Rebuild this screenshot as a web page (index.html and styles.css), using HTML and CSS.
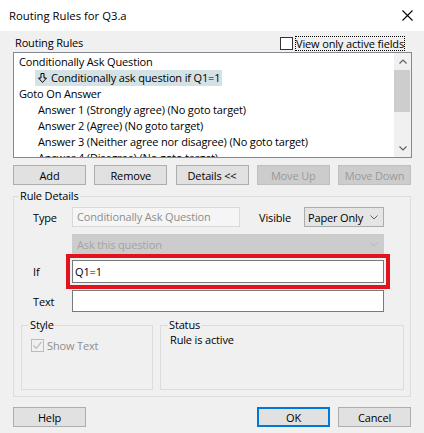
FILE: index.html
```html
<!DOCTYPE html>
<html lang="en">
<head>
<meta charset="utf-8">
<title>Routing Rules for Q3.a</title>
<link rel="stylesheet" href="styles.css">
</head>
<body>
<div class="titlebar">
  <span class="title">Routing Rules for Q3.a</span>
  <svg class="close" width="11" height="11" viewBox="0 0 11 11"><path d="M0.5 0.5L10.5 10.5M10.5 0.5L0.5 10.5" stroke="#000" stroke-width="1.1" fill="none"/></svg>
</div>
<div class="content">
  <div class="rr-head">
    <span class="rr-label">Routing Rules</span>
    <span class="chk"><span class="box"></span><span class="focus">View only active fields</span></span>
  </div>
  <div class="listbox">
    <div class="items">
      <div class="item">Conditionally Ask Question</div>
      <div class="item sub"><span class="sel"><svg class="arrow" width="9" height="10" viewBox="0 0 9 10"><path d="M3 0.5H6V5H8.5L4.5 9.5L0.5 5H3Z" fill="none" stroke="#000" stroke-width="1"/></svg>Conditionally ask question if Q1=1</span></div>
      <div class="item">Goto On Answer</div>
      <div class="item sub">Answer 1 (Strongly agree) (No goto target)</div>
      <div class="item sub">Answer 2 (Agree) (No goto target)</div>
      <div class="item sub">Answer 3 (Neither agree nor disagree) (No goto target)</div>
      <div class="item sub">Answer 4 (Disagree) (No goto target)</div>
    </div>
    <div class="scrollbar">
      <div class="sb-btn"><svg width="8" height="5" viewBox="0 0 8 5"><path d="M0.5 4.5L4 1L7.5 4.5" fill="none" stroke="#606060" stroke-width="1.2"/></svg></div>
      <div class="sb-track"><div class="thumb"></div></div>
      <div class="sb-btn"><svg width="8" height="5" viewBox="0 0 8 5"><path d="M0.5 0.5L4 4L7.5 0.5" fill="none" stroke="#606060" stroke-width="1.2"/></svg></div>
    </div>
  </div>
  <div class="btnrow">
    <button class="btn">Add</button>
    <button class="btn">Remove</button>
    <button class="btn">Details &lt;&lt;</button>
    <button class="btn disabled">Move Up</button>
    <button class="btn disabled">Move Down</button>
  </div>
  <fieldset class="details">
    <legend>Rule Details</legend>
    <div class="details-in">
      <div class="row">
        <span class="lbl">Type</span>
        <span class="field type">Conditionally Ask Question</span>
        <span class="vis-lbl">Visible</span>
        <span class="combo"><span>Paper Only</span><svg width="8" height="5" viewBox="0 0 8 5"><path d="M0.5 0.5L4 4L7.5 0.5" fill="none" stroke="#606060" stroke-width="1"/></svg></span>
      </div>
      <div class="row ask-row">
        <span class="lbl"></span>
        <span class="combo disabled wide"><span>Ask this question</span><svg width="8" height="5" viewBox="0 0 8 5"><path d="M0.5 0.5L4 4L7.5 0.5" fill="none" stroke="#b8b8b8" stroke-width="1"/></svg></span>
      </div>
      <div class="row if-row">
        <span class="lbl">If</span>
        <span class="highlight"><span class="field edit if">Q1=1</span></span>
      </div>
      <div class="row text-row">
        <span class="lbl">Text</span>
        <span class="field edit text"></span>
      </div>
      <div class="groups">
        <fieldset class="grp style">
          <legend>Style</legend>
          <div class="cb-row"><span class="dbox"><svg width="11" height="11" viewBox="0 0 11 11"><path d="M1.5 5.5L4.2 8.3L9.5 2" fill="none" stroke="#bdbdbd" stroke-width="1.3"/></svg></span><span class="dis-text">Show Text</span></div>
        </fieldset>
        <fieldset class="grp status">
          <legend>Status</legend>
          <div class="status-text">Rule is active</div>
        </fieldset>
      </div>
    </div>
  </fieldset>
  <div class="footer">
    <button class="btn">Help</button>
    <span class="spacer"></span>
    <button class="btn default">OK</button>
    <button class="btn">Cancel</button>
  </div>
</div>
</body>
</html>
```
FILE: styles.css
```css
* { box-sizing: border-box; }
html, body { margin: 0; padding: 0; }
body {
  width: 424px;
  height: 433px;
  overflow: hidden;
  background: #f0f0f0;
  font-family: "Segoe UI", "Open Sans", sans-serif;
  font-size: 11px;
  letter-spacing: -0.15px;
  color: #000;
}
.titlebar {
  height: 31px;
  background: #fff;
  display: flex;
  align-items: center;
  justify-content: space-between;
  padding: 0 11px 0 9px;
}
.title { line-height: 16px; font-size: 11.3px; letter-spacing: 0; }
.content { padding: 0 12px 0 13px; }
.rr-head {
  height: 21px;
  padding-top: 3px;
  display: flex;
  align-items: center;
  justify-content: space-between;
}
.rr-label { padding-left: 2px; line-height: 16px; }
.chk { display: flex; align-items: center; gap: 2px; margin-right: 7px; }
.box { width: 13px; height: 13px; border: 1px solid #333; background: #fff; }
.focus { outline: 1px dotted #000; outline-offset: -1px; padding: 0 1px; line-height: 15px; }
.listbox {
  height: 106px;
  border: 1px solid #828790;
  background: #fff;
  display: flex;
  overflow: hidden;
}
.items { flex: 1; padding: 1px 0 0 5px; overflow: hidden; }
.item { height: 16px; line-height: 16px; white-space: nowrap; }
.item.sub { padding-left: 19px; }
.sel {
  display: inline-flex;
  align-items: center;
  gap: 4px;
  margin-left: -3px;
  padding: 0 2px 0 3px;
  height: 16px;
  background: #d5e2e5;
}
.arrow { display: block; }
.scrollbar { width: 17px; background: #f0f0f0; display: flex; flex-direction: column; }
.sb-btn { height: 17px; display: flex; align-items: center; justify-content: center; }
.sb-track { flex: 1; }
.thumb { height: 42px; background: #cdcdcd; margin-right: 1px; }
.btn {
  width: 73px;
  height: 20px;
  padding: 0;
  border: 1px solid #adadad;
  background: #e1e1e1;
  font: inherit;
  letter-spacing: inherit;
  color: #000;
  display: flex;
  align-items: center;
  justify-content: center;
}
.btn.disabled { background: #cccccc; border-color: #bfbfbf; color: #9a9a9a; }
.btn.default { border: 2px solid #0078d7; }
.btnrow {
  display: flex;
  justify-content: space-between;
  margin: 7px 1px 0 0;
}
.details {
  margin: 3px 1px 0 0;
  padding: 0;
  border: 1px solid #dcdcdc;
  min-width: 0;
}
.details > legend { margin-left: 5px; padding: 0 1px; line-height: 16px; }
.details-in { padding: 3px 6px 6px 7px; }
.row {
  display: flex;
  align-items: center;
  height: 20px;
  padding: 0 20px 0 12px;
}
.lbl { width: 39px; flex: none; }
.field {
  height: 20px;
  line-height: 18px;
  padding-left: 4px;
  white-space: nowrap;
  overflow: hidden;
}
.field.type {
  width: 168px;
  border: 1px solid #d9d9d9;
  background: #f5f5f5;
  color: #8d8d8d;
}
.vis-lbl { margin-left: auto; margin-right: 13px; }
.combo {
  width: 80px;
  height: 20px;
  border: 1px solid #acacac;
  background: #e5e5e5;
  display: flex;
  align-items: center;
  justify-content: space-between;
  padding: 0 5px 0 3px;
}
.combo.disabled { background: #cccccc; border-color: #cccccc; color: #a4a4a4; }
.combo.wide { flex: 1; width: auto; padding-left: 4px; }
.ask-row { margin-top: 7px; }
.if-row { height: 35px; }
.highlight {
  flex: 1;
  display: flex;
  margin: 0 -6px;
  border: 4px solid #e3131d;
  padding: 2px;
}
.field.edit { border: 1px solid #7a7a7a; background: #fff; padding-left: 2px; }
.field.if { flex: 1; height: 23px; line-height: 21px; }
.text-row { height: 22px; margin-top: 1px; }
.field.text { flex: 1; height: 22px; }
.groups { display: flex; gap: 7px; margin-top: 6px; }
.grp {
  margin: 0;
  padding: 0;
  height: 72px;
  border: 1px solid #dcdcdc;
  min-width: 0;
}
.grp > legend { margin-left: 7px; padding: 0 1px; line-height: 14px; }
.grp.style { width: 132px; }
.grp.status { width: 244px; }
.cb-row { display: flex; align-items: center; gap: 3px; height: 14px; margin-top: 6px; padding-left: 9px; }
.dbox {
  width: 13px;
  height: 13px;
  border: 1px solid #bcbcbc;
  background: #f0f0f0;
  display: flex;
  align-items: center;
  justify-content: center;
}
.dis-text { color: #8d8d8d; }
.status-text { padding: 1px 0 0 9px; line-height: 14px; }
.footer { display: flex; gap: 8px; margin: 10px 1px 0 0; }
.spacer { flex: 1; }
```
